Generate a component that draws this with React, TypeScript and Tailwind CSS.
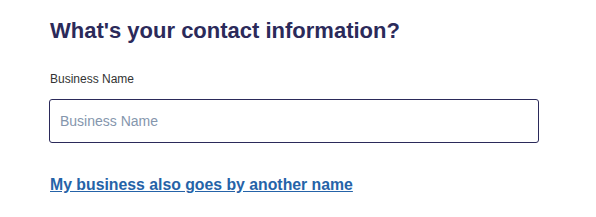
import React from 'react';

export default function App() {
  return (
    <div className="min-h-screen bg-white font-['Liberation_Sans',Arial,sans-serif] pl-[49px] pr-[57px] pt-[17px]">
      {/* Section heading */}
      <h1 className="text-[22px] leading-[28px] font-bold text-[#2b2a5a] pl-px">
        What's your contact information?
      </h1>

      {/* Business name field */}
      <div className="mt-[27px] flex flex-col">
        <label className="text-[12px] leading-[14px] text-[#333333] pl-px">Business Name</label>
        <input
          type="text"
          placeholder="Business Name"
          className="mt-[13px] h-[44px] w-full rounded-[3px] border border-[#2b2a5a] px-[10px] text-[14px] text-[#333333] placeholder:text-[#8596ad] outline-none"
        />
      </div>

      {/* Alternate name link */}
      <a
        href="#"
        className="mt-[32px] inline-block pl-px text-[15.8px] leading-[20px] font-bold text-[#2563a8] underline"
      >
        My business also goes by another name
      </a>
    </div>
  );
}
